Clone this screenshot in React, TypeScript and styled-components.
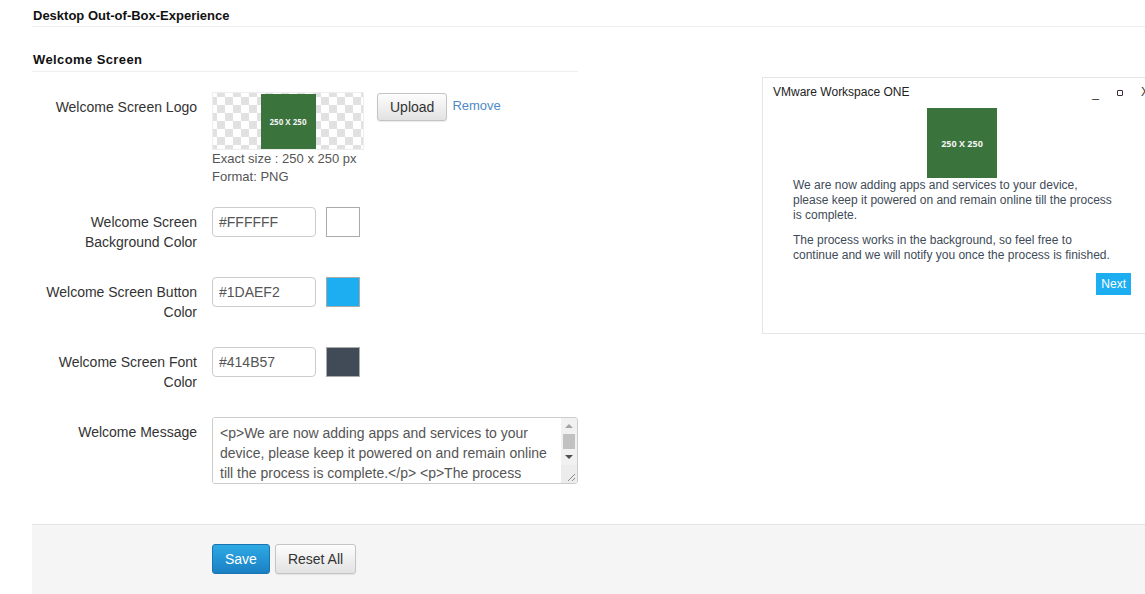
import React, { useState } from 'react';
import styled, { createGlobalStyle } from 'styled-components';

const GlobalStyle = createGlobalStyle`
  html, body {
    margin: 0;
    padding: 0;
    overflow: hidden;
    background: #fff;
    font-family: "Liberation Sans", Arial, sans-serif;
    color: #333;
  }
  * { box-sizing: border-box; }
`;

const welcomeText =
  '<p>We are now adding apps and services to your device, please keep it powered on and remain online till the process is complete.</p> <p>The process works in the background, so feel free to continue and we will notify you once the process is finished.</p>';

const colorFields = [
  { label: 'Welcome Screen Background Color', value: '#FFFFFF' },
  { label: 'Welcome Screen Button Color', value: '#1DAEF2' },
  { label: 'Welcome Screen Font Color', value: '#414B57' },
];

const Page = styled.div`
  padding-left: 32px;
  width: 100%;
  height: 594px;
`;

const PageHeader = styled.h1`
  margin: 0;
  padding: 8px 0 3px 1px;
  font-size: 13px;
  line-height: 15px;
  font-weight: bold;
  color: #111;
  border-bottom: 1px solid #eee;
`;

const Main = styled.div`
  display: flex;
  align-items: flex-start;
`;

const FormColumn = styled.div`
  width: 546px;
  flex-shrink: 0;
`;

const SectionTitle = styled.h2`
  margin: 25px 0 20px;
  padding: 0 0 3px 1px;
  font-size: 13px;
  line-height: 16px;
  letter-spacing: 0.4px;
  font-weight: bold;
  color: #111;
  border-bottom: 1px solid #eee;
`;

const Row = styled.div<{ $gap: number }>`
  display: flex;
  align-items: flex-start;
  margin-bottom: ${p => p.$gap}px;
`;

const Label = styled.label`
  width: 165px;
  margin-right: 15px;
  padding-top: 5px;
  text-align: right;
  font-size: 14px;
  line-height: 20px;
  color: #333;
`;

const Controls = styled.div`
  display: flex;
  flex-direction: column;
`;

const LogoLine = styled.div`
  display: flex;
  align-items: flex-start;
`;

const Checker = styled.div`
  width: 152px;
  height: 58px;
  display: flex;
  align-items: center;
  justify-content: center;
  border: 1px solid #eee;
  background: repeating-conic-gradient(#e1e1e1 0 25%, #fff 0 50%) -4px -4px / 16px 16px;
`;

const Placeholder = styled.div<{ $size: number; $font: number }>`
  width: ${p => p.$size}px;
  height: ${p => p.$size}px;
  background: #3a733c;
  color: #f2f2f2;
  display: flex;
  align-items: center;
  justify-content: center;
  font-family: "Open Sans", "Liberation Sans", sans-serif;
  font-weight: bold;
  font-size: ${p => p.$font}px;
`;

const GreyButton = styled.button`
  height: 28px;
  padding: 0 12px;
  font-family: inherit;
  font-size: 14px;
  color: #333;
  border: 1px solid #c4c4c4;
  border-radius: 3px;
  background: linear-gradient(#fdfdfd, #e2e2e2);
  box-shadow: 0 1px 1px rgba(0, 0, 0, 0.08);
  cursor: pointer;
`;

const UploadButton = styled(GreyButton)`
  margin: 1px 0 0 13px;
`;

const RemoveLink = styled.a`
  margin: 6px 0 0 5px;
  font-size: 13px;
  line-height: 15px;
  color: #4f8ac6;
  text-decoration: none;
  cursor: pointer;
`;

const Hint = styled.div`
  font-size: 13px;
  line-height: 18px;
  color: #555;
`;

const ColorLine = styled.div`
  display: flex;
  align-items: center;
`;

const ColorInput = styled.input`
  width: 104px;
  height: 30px;
  padding: 0 6px;
  border: 1px solid #ccc;
  border-radius: 4px;
  font-family: inherit;
  font-size: 14px;
  color: #555;
  outline: none;
`;

const Swatch = styled.div<{ $color: string }>`
  width: 34px;
  height: 30px;
  margin-left: 10px;
  border: 1px solid #aaa;
  background: ${p => p.$color};
`;

const MessageBox = styled.div`
  display: flex;
  width: 366px;
  height: 67px;
  border: 1px solid #ccc;
  border-radius: 3px;
  overflow: hidden;
`;

const MessageArea = styled.textarea`
  flex: 1;
  height: 100%;
  padding: 5px 7px;
  border: none;
  outline: none;
  font-family: inherit;
  font-size: 14px;
  line-height: 20px;
  color: #555;
  resize: none;
  overflow: hidden;
`;

const ScrollColumn = styled.div`
  width: 16px;
  display: flex;
  flex-direction: column;
  background: #f1f1f1;
`;

const ScrollArrow = styled.div<{ $up?: boolean }>`
  height: 16px;
  display: flex;
  align-items: center;
  justify-content: center;

  &::before {
    content: '';
    border-left: 4px solid transparent;
    border-right: 4px solid transparent;
    ${p =>
      p.$up
        ? 'border-bottom: 4px solid #a3a3a3;'
        : 'border-top: 4px solid #505050;'}
  }
`;

const ScrollThumb = styled.div`
  height: 15px;
  margin: 0 2px;
  background: #c1c1c1;
`;

const ResizeCorner = styled.div`
  flex: 1;
  display: flex;
  align-items: flex-end;
  justify-content: flex-end;
  background: #ececec;
  padding: 0 1px 1px 0;
`;

const Preview = styled.div`
  margin: 50px 0 0 184px;
  width: 400px;
  height: 257px;
  flex-shrink: 0;
  border: 1px solid #e6e6e6;
  display: flex;
  flex-direction: column;
`;

const PreviewTitleBar = styled.div`
  display: flex;
  align-items: flex-start;
  padding: 7px 12px 0 10px;
  font-size: 12px;
  line-height: 15px;
  color: #222;
`;

const WindowControls = styled.div`
  margin-left: auto;
  display: flex;
  align-items: center;
  height: 15px;
  font-size: 12px;
  color: #333;
`;

const Minimize = styled.span`
  position: relative;
  top: 1px;
`;

const Maximize = styled.span`
  width: 6px;
  height: 6px;
  margin-left: 18px;
  border: 1px solid #3a2a3a;
  border-radius: 1px;
`;

const Close = styled.span`
  margin-left: 18px;
`;

const PreviewLogo = styled(Placeholder)`
  align-self: center;
  margin-top: 8px;
`;

const PreviewText = styled.div`
  width: 320px;
  margin-left: 30px;
  font-size: 12px;
  line-height: 15px;
  color: #414b57;

  p {
    margin: 0 0 10px;
  }
`;

const NextButton = styled.button`
  align-self: flex-end;
  margin-right: 30px;
  height: 22px;
  padding: 0 5px;
  border: none;
  background: #1daef2;
  color: #fff;
  font-family: inherit;
  font-size: 12px;
  cursor: pointer;
`;

const Footer = styled.div`
  margin-top: 40px;
  height: 70px;
  padding: 19px 0 0 180px;
  background: #f5f5f5;
  border-top: 1px solid #e3e3e3;
  display: flex;
  align-items: flex-start;
  gap: 5px;
`;

const SaveButton = styled.button`
  height: 30px;
  padding: 0 12px;
  border: 1px solid #1a72b0;
  border-radius: 3px;
  background: linear-gradient(#2eaae4, #1a80c4);
  color: #fff;
  font-family: inherit;
  font-size: 14px;
  cursor: pointer;
`;

const ResetButton = styled(GreyButton)`
  height: 30px;
  padding: 0 12px;
`;

function App() {
  const [colors, setColors] = useState(colorFields.map(f => f.value));
  const [message, setMessage] = useState(welcomeText);

  return (
    <>
      <GlobalStyle />
      <Page>
        <PageHeader>Desktop Out-of-Box-Experience</PageHeader>
        <Main>
          <FormColumn>
            <SectionTitle>Welcome Screen</SectionTitle>

            <Row $gap={21}>
              <Label>Welcome Screen Logo</Label>
              <Controls>
                <LogoLine>
                  <Checker>
                    <Placeholder $size={55} $font={8}>250 X 250</Placeholder>
                  </Checker>
                  <UploadButton>Upload</UploadButton>
                  <RemoveLink>Remove</RemoveLink>
                </LogoLine>
                <Hint>Exact size : 250 x 250 px</Hint>
                <Hint>Format: PNG</Hint>
              </Controls>
            </Row>

            {colorFields.map((field, i) => (
              <Row $gap={25} key={field.label}>
                <Label>{field.label}</Label>
                <ColorLine>
                  <ColorInput
                    value={colors[i]}
                    onChange={e => setColors(colors.map((c, j) => (j == i ? e.target.value : c)))}
                  />
                  <Swatch $color={colors[i]} />
                </ColorLine>
              </Row>
            ))}

            <Row $gap={0}>
              <Label>Welcome Message</Label>
              <MessageBox>
                <MessageArea value={message} onChange={e => setMessage(e.target.value)} />
                <ScrollColumn>
                  <ScrollArrow $up />
                  <ScrollThumb />
                  <ScrollArrow />
                  <ResizeCorner>
                    <svg width="10" height="10" viewBox="0 0 10 10">
                      <path d="M9 2 L2 9 M9 6 L6 9" stroke="#8a8a8a" strokeWidth="1" fill="none" />
                    </svg>
                  </ResizeCorner>
                </ScrollColumn>
              </MessageBox>
            </Row>
          </FormColumn>

          <Preview>
            <PreviewTitleBar>
              VMware Workspace ONE
              <WindowControls>
                <Minimize>_</Minimize>
                <Maximize />
                <Close>X</Close>
              </WindowControls>
            </PreviewTitleBar>
            <PreviewLogo $size={70} $font={9}>250 X 250</PreviewLogo>
            <PreviewText>
              <p>
                We are now adding apps and services to your device, please keep it powered on and
                remain online till the process is complete.
              </p>
              <p>
                The process works in the background, so feel free to continue and we will notify
                you once the process is finished.
              </p>
            </PreviewText>
            <NextButton>Next</NextButton>
          </Preview>
        </Main>
        <Footer>
          <SaveButton>Save</SaveButton>
          <ResetButton>Reset All</ResetButton>
        </Footer>
      </Page>
    </>
  );
}

export default App;
